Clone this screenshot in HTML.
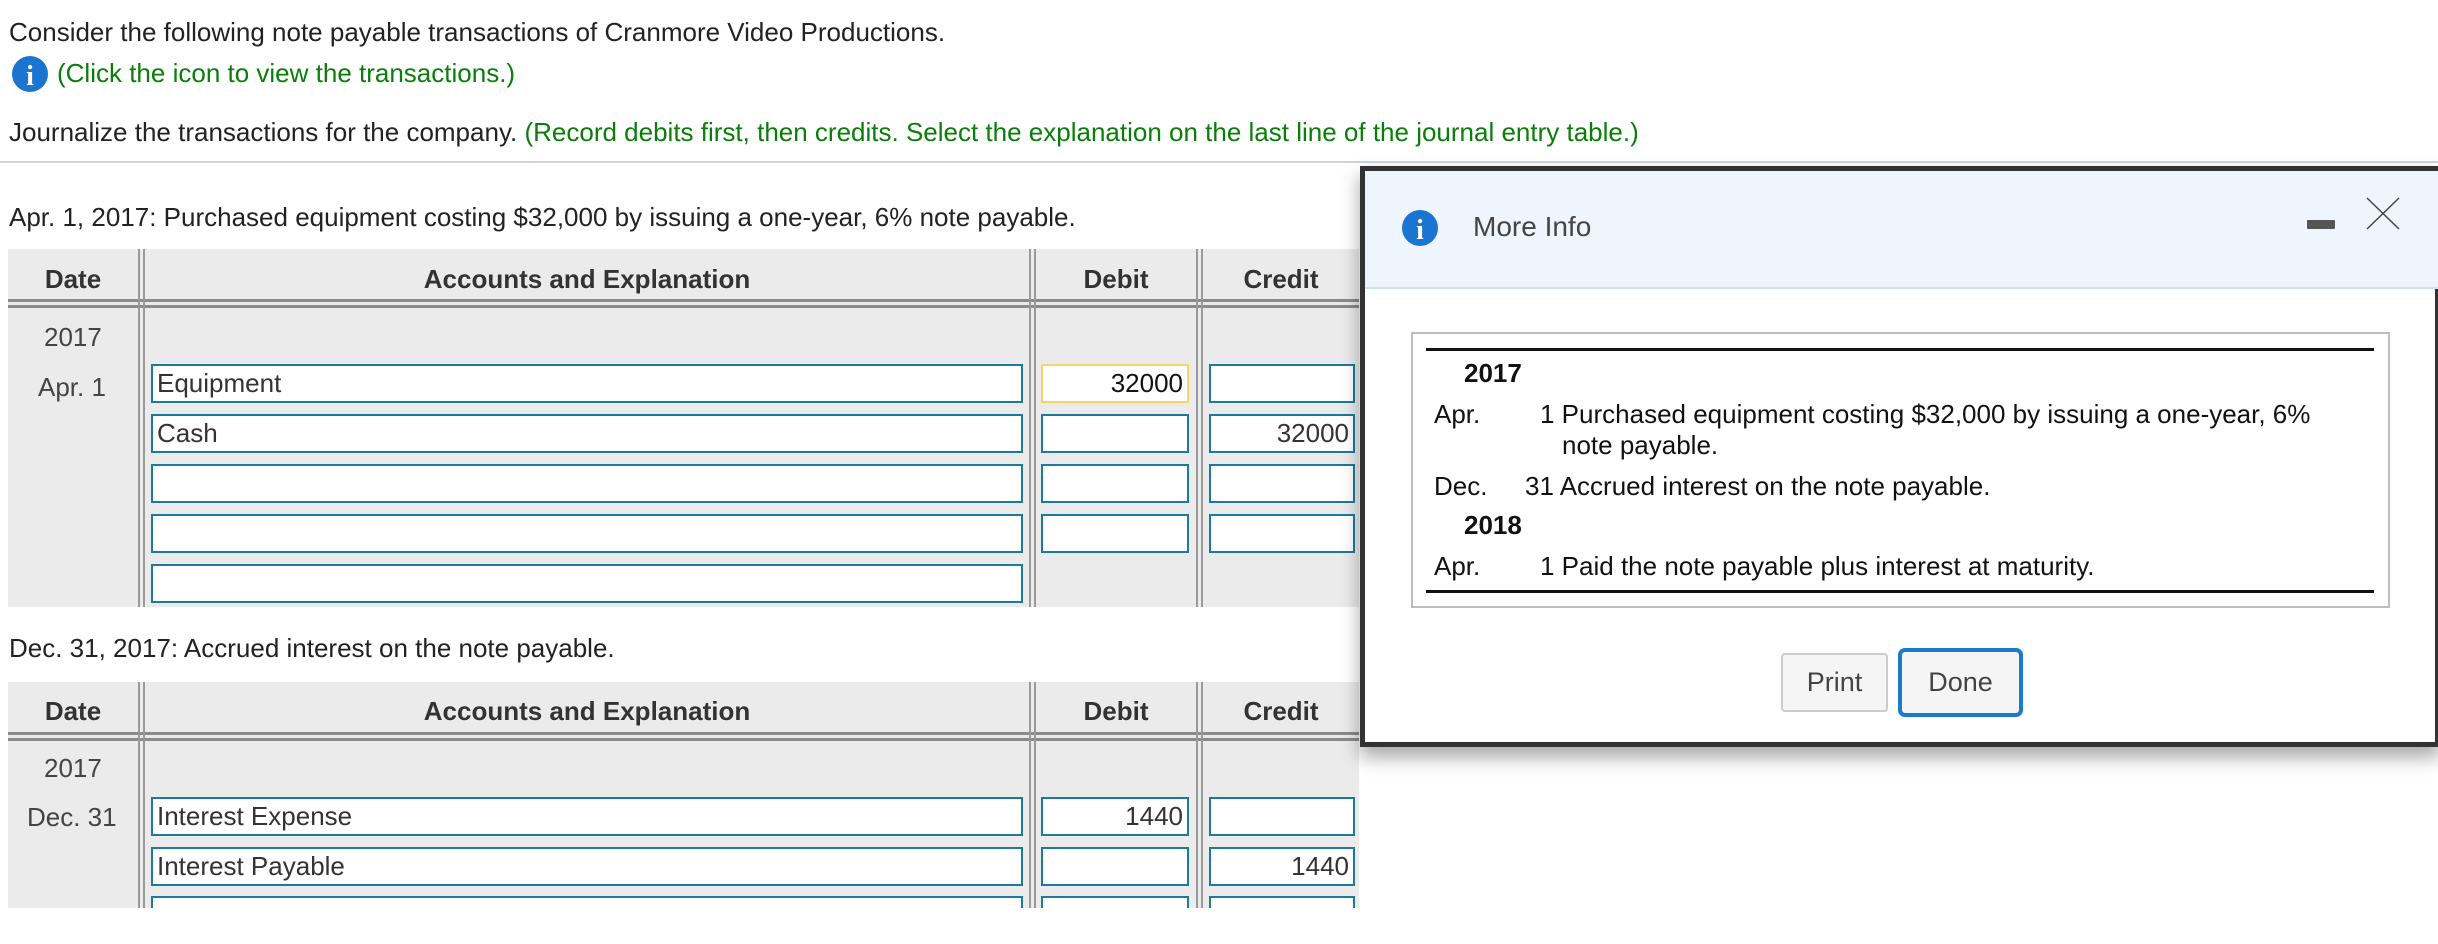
<!DOCTYPE html>
<html><head><meta charset="utf-8"><style>
*{margin:0;padding:0;box-sizing:border-box}
body{width:2438px;height:944px;background:#fff;position:relative;overflow:hidden;font-family:"Liberation Sans",Arial,sans-serif;color:#222}
.a{position:absolute;white-space:nowrap}
.t{font-size:26px;line-height:30px}
.g{color:#0a7d0a}
.tbl{position:absolute;left:8px;width:1351px;background:#ebebeb}
.vl{position:absolute;width:2px;background:#9a9a9a}
.hl{position:absolute;left:8px;width:1351px;height:3px;background:#8a8a8a}
.inp{position:absolute;height:39px;background:#fff;border:2px solid #1c7a9c;font-size:26px;line-height:35px;padding:0 4px;color:#333}
.r{text-align:right}
.h{font-weight:bold;color:#333;font-size:26px;line-height:30px;text-align:center}
.d{color:#444;font-size:26px;line-height:30px}
.m{font-size:26px;line-height:30px;color:#111}
</style></head><body>

<div class="a t" style="left:9px;top:17px">Consider the following note payable transactions of Cranmore Video Productions.</div>
<svg class="a" style="left:11px;top:55px" width="38" height="38" viewBox="0 0 38 38"><circle cx="19" cy="19" r="18" fill="#1a74d0"/><text x="19" y="30" font-family="Liberation Serif,serif" font-weight="bold" font-size="28" fill="#fff" text-anchor="middle">i</text></svg>
<div class="a t g" style="left:57px;top:58px">(Click the icon to view the transactions.)</div>
<div class="a t" style="left:9px;top:117px">Journalize the transactions for the company. <span class="g">(Record debits first, then credits. Select the explanation on the last line of the journal entry table.)</span></div>
<div class="a" style="left:0;top:161px;width:2438px;height:2px;background:#cfd3de"></div>

<div class="a t" style="left:9px;top:202px">Apr. 1, 2017: Purchased equipment costing $32,000 by issuing a one-year, 6% note payable.</div>

<div class="tbl" style="top:249px;height:358px"></div>
<div class="hl" style="top:299px"></div><div class="hl" style="top:305px"></div>
<div class="vl" style="left:138px;top:249px;height:358px"></div><div class="vl" style="left:143px;top:249px;height:358px"></div>
<div class="vl" style="left:1029px;top:249px;height:358px"></div><div class="vl" style="left:1034px;top:249px;height:358px"></div>
<div class="vl" style="left:1196px;top:249px;height:358px"></div><div class="vl" style="left:1201px;top:249px;height:358px"></div>
<div class="a h" style="left:8px;width:130px;top:264px">Date</div>
<div class="a h" style="left:145px;width:884px;top:264px">Accounts and Explanation</div>
<div class="a h" style="left:1036px;width:160px;top:264px">Debit</div>
<div class="a h" style="left:1203px;width:156px;top:264px">Credit</div>
<div class="a d" style="left:44px;top:322px">2017</div>
<div class="a d" style="left:38px;top:372px">Apr. 1</div>
<div class="inp" style="left:151px;top:364px;width:872px">Equipment</div>
<div class="inp r" style="left:1041px;top:364px;width:148px;border-color:#f3d66a;color:#111">32000</div>
<div class="inp" style="left:1209px;top:364px;width:146px"></div>
<div class="inp" style="left:151px;top:414px;width:872px">Cash</div>
<div class="inp" style="left:1041px;top:414px;width:148px"></div>
<div class="inp r" style="left:1209px;top:414px;width:146px">32000</div>
<div class="inp" style="left:151px;top:464px;width:872px"></div>
<div class="inp" style="left:1041px;top:464px;width:148px"></div>
<div class="inp" style="left:1209px;top:464px;width:146px"></div>
<div class="inp" style="left:151px;top:514px;width:872px"></div>
<div class="inp" style="left:1041px;top:514px;width:148px"></div>
<div class="inp" style="left:1209px;top:514px;width:146px"></div>
<div class="inp" style="left:151px;top:564px;width:872px"></div>

<div class="a t" style="left:9px;top:633px">Dec. 31, 2017: Accrued interest on the note payable.</div>

<div class="tbl" style="top:682px;height:226px"></div>
<div class="hl" style="top:732px"></div><div class="hl" style="top:738px"></div>
<div class="vl" style="left:138px;top:682px;height:226px"></div><div class="vl" style="left:143px;top:682px;height:226px"></div>
<div class="vl" style="left:1029px;top:682px;height:226px"></div><div class="vl" style="left:1034px;top:682px;height:226px"></div>
<div class="vl" style="left:1196px;top:682px;height:226px"></div><div class="vl" style="left:1201px;top:682px;height:226px"></div>
<div class="a h" style="left:8px;width:130px;top:696px">Date</div>
<div class="a h" style="left:145px;width:884px;top:696px">Accounts and Explanation</div>
<div class="a h" style="left:1036px;width:160px;top:696px">Debit</div>
<div class="a h" style="left:1203px;width:156px;top:696px">Credit</div>
<div class="a d" style="left:44px;top:753px">2017</div>
<div class="a d" style="left:27px;top:802px">Dec. 31</div>
<div class="inp" style="left:151px;top:797px;width:872px">Interest Expense</div>
<div class="inp r" style="left:1041px;top:797px;width:148px">1440</div>
<div class="inp" style="left:1209px;top:797px;width:146px"></div>
<div class="inp" style="left:151px;top:847px;width:872px">Interest Payable</div>
<div class="inp" style="left:1041px;top:847px;width:148px"></div>
<div class="inp r" style="left:1209px;top:847px;width:146px">1440</div>
<div class="a" style="left:0;top:896px;width:1360px;height:12px;overflow:hidden">
 <div class="inp" style="left:151px;top:0;width:872px"></div>
 <div class="inp" style="left:1041px;top:0;width:148px"></div>
 <div class="inp" style="left:1209px;top:0;width:146px"></div>
</div>

<div class="a" style="left:1360px;top:166px;width:1080px;height:581px;background:#fff;border:5px solid #333;box-shadow:0 10px 18px rgba(0,0,0,0.35)">
 <div class="a" style="left:0;top:0;width:1075px;height:118px;background:#eff5fd;border-bottom:2px solid #cde2f4"></div>
</div>
<svg class="a" style="left:1401px;top:209px" width="38" height="38" viewBox="0 0 38 38"><circle cx="19" cy="19" r="18" fill="#1a74d0"/><text x="19" y="30" font-family="Liberation Serif,serif" font-weight="bold" font-size="28" fill="#fff" text-anchor="middle">i</text></svg>
<div class="a" style="left:1473px;top:211px;font-size:28px;line-height:32px;color:#444">More Info</div>
<div class="a" style="left:2307px;top:220px;width:28px;height:9px;background:#555;border-radius:1px"></div>
<svg class="a" style="left:2366px;top:197px" width="34" height="33" viewBox="0 0 34 33"><path d="M1 1L33 32M33 1L1 32" stroke="#444" stroke-width="1.5" fill="none"/></svg>

<div class="a" style="left:1411px;top:332px;width:979px;height:276px;border:2px solid #bdbdbd;background:#fff"></div>
<div class="a" style="left:1426px;top:348px;width:948px;height:3px;background:#111"></div>
<div class="a m" style="left:1464px;top:358px;font-weight:bold">2017</div>
<div class="a m" style="left:1434px;top:399px">Apr.</div>
<div class="a m" style="left:1540px;top:399px">1 Purchased equipment costing $32,000 by issuing a one-year, 6%</div>
<div class="a m" style="left:1562px;top:430px">note payable.</div>
<div class="a m" style="left:1434px;top:471px">Dec.</div>
<div class="a m" style="left:1525px;top:471px">31 Accrued interest on the note payable.</div>
<div class="a m" style="left:1464px;top:510px;font-weight:bold">2018</div>
<div class="a m" style="left:1434px;top:551px">Apr.</div>
<div class="a m" style="left:1540px;top:551px">1 Paid the note payable plus interest at maturity.</div>
<div class="a" style="left:1426px;top:590px;width:948px;height:3px;background:#111"></div>

<div class="a" style="left:1781px;top:653px;width:107px;height:59px;border:2px solid #ccc;border-radius:4px;background:#f5f5f5;font-size:27px;line-height:55px;text-align:center;color:#444">Print</div>
<div class="a" style="left:1898px;top:648px;width:125px;height:69px;border:4px solid #1a7acb;border-radius:7px;background:#f5f5f5;font-size:27px;line-height:61px;text-align:center;color:#444">Done</div>
</body></html>
